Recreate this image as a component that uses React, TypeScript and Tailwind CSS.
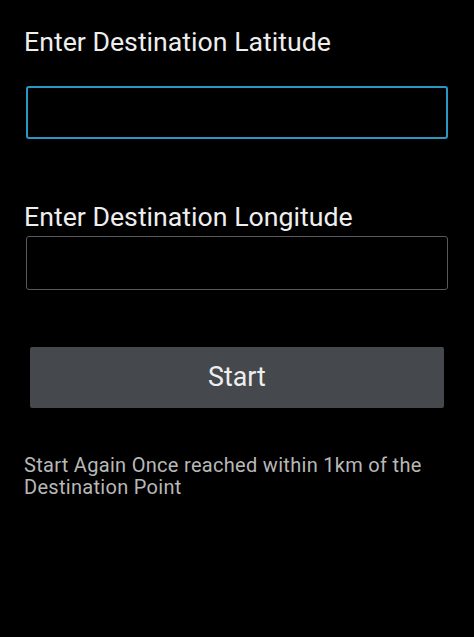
export default function App() {
  return (
    <div className="w-[474px] h-[637px] bg-black flex flex-col" style={{ fontFamily: "Roboto, 'Noto Sans', sans-serif" }}>
      <div className="pl-[24px] pt-[26px] text-[26.7px] leading-[32px] text-[#eeeeee]">Enter Destination Latitude</div>
      <div className="mt-[28px] ml-[26px] w-[422px] h-[53px] rounded-[3px] border-2 border-[#2a97c4] bg-black" />
      <div className="pl-[24px] mt-[62px] text-[26.7px] leading-[32px] text-[#eeeeee]">Enter Destination Longitude</div>
      <div className="mt-[3px] ml-[26px] w-[422px] h-[54px] rounded-[3px] border border-[#58595b] bg-black" />
      <div className="mt-[57px] ml-[30px] w-[414px] h-[61px] rounded-[2px] bg-[#45484c] flex items-center justify-center text-[26.8px] text-[#eeeeee]">Start</div>
      <div className="pl-[24px] pr-[24px] mt-[46px] text-[20px] leading-[22.3px] tracking-[0.3px] text-[#b8b8b8]">Start Again Once reached within 1km of the Destination Point</div>
    </div>
  );
}
